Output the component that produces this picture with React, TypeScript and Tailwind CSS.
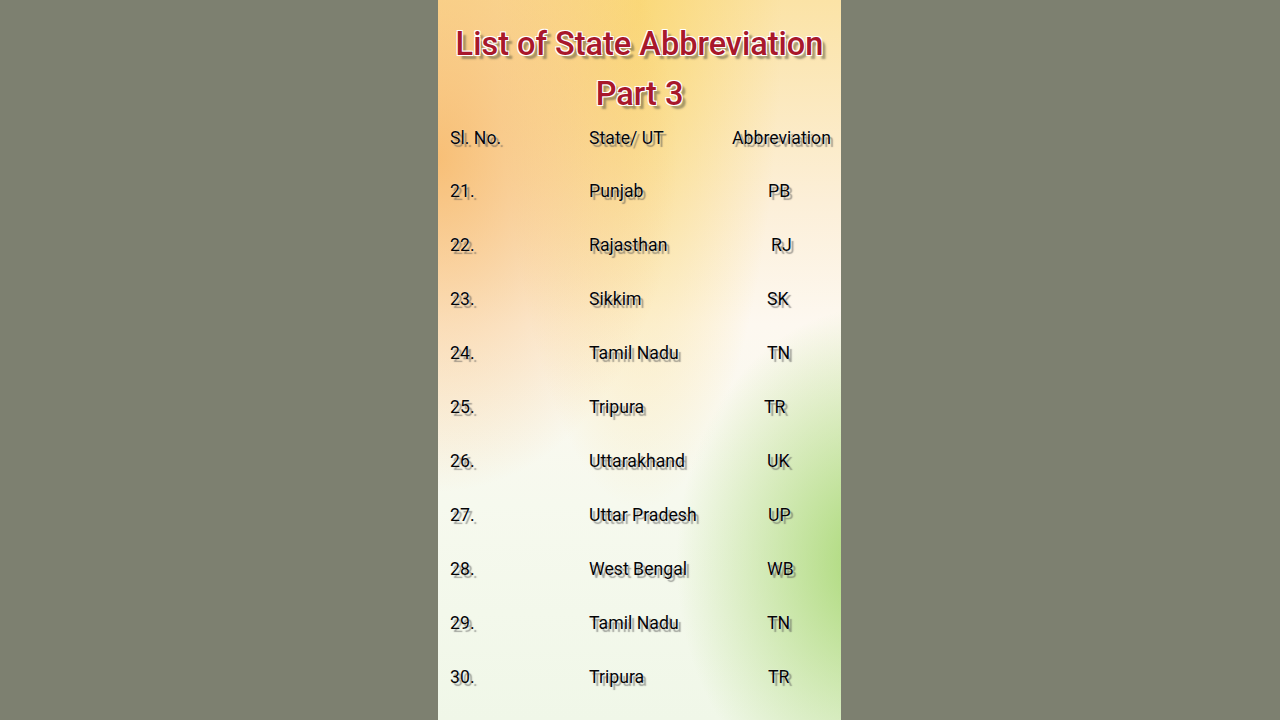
import React from "react";

const rows: { n: string; s: string; a: string; ml: string }[] = [
  { n: "21.", s: "Punjab", a: "PB", ml: "ml-[36px]" },
  { n: "22.", s: "Rajasthan", a: "RJ", ml: "ml-[39px]" },
  { n: "23.", s: "Sikkim", a: "SK", ml: "ml-[35px]" },
  { n: "24.", s: "Tamil Nadu", a: "TN", ml: "ml-[35px]" },
  { n: "25.", s: "Tripura", a: "TR", ml: "ml-[32px]" },
  { n: "26.", s: "Uttarakhand", a: "UK", ml: "ml-[35px]" },
  { n: "27.", s: "Uttar Pradesh", a: "UP", ml: "ml-[36px]" },
  { n: "28.", s: "West Bengal", a: "WB", ml: "ml-[35px]" },
  { n: "29.", s: "Tamil Nadu", a: "TN", ml: "ml-[35px]" },
  { n: "30.", s: "Tripura", a: "TR", ml: "ml-[36px]" },
];

const cell =
  "text-[17.7px] text-[#050505] [text-shadow:0_0_1px_#fff,3px_3px_1px_rgba(80,80,80,0.5)]";

export default function App() {
  return (
    <div className="w-full h-[720px] bg-[#7d8070] flex font-['Roboto',sans-serif]">
      <div className="ml-[438px] w-[403px] h-[720px] overflow-hidden pt-[19px] bg-[radial-gradient(ellipse_at_0%_22%,rgba(246,176,90,0.75)_0,rgba(246,176,90,0)_42%),radial-gradient(ellipse_at_50%_0%,rgba(250,214,110,0.8)_0,rgba(250,214,110,0)_50%),radial-gradient(ellipse_at_108%_78%,rgba(165,214,110,0.95)_0,rgba(165,214,110,0)_32%),linear-gradient(180deg,#fbe3a6_0%,#fcefd8_28%,#fdf8f0_45%,#f6f9ee_70%,#f0f7e8_100%)]">
        <div className="text-center text-[32.5px] leading-[50px] font-medium text-[#a8182b] [text-shadow:-1px_-1px_0_#fff,1px_-1px_0_#fff,-1px_1px_0_#fff,1px_1px_0_#fff,4px_4px_2px_rgba(105,100,70,0.6)]">
          <div>List of State Abbreviation</div>
          <div>Part 3</div>
        </div>
        <div className="pl-[12px]">
          <div className="grid grid-cols-[139px_143px_1fr] h-[45px] pb-[6px] items-center">
            <div className={cell}>Sl. No.</div>
            <div className={cell}>State/ UT</div>
            <div className={cell}>Abbreviation</div>
          </div>
          {rows.map((r, i) => (
            <div key={i} className="grid grid-cols-[139px_143px_1fr] h-[54px] items-center">
              <div className={cell}>{r.n}</div>
              <div className={cell}>{r.s}</div>
              <div className={`${cell} ${r.ml}`}>{r.a}</div>
            </div>
          ))}
        </div>
      </div>
    </div>
  );
}
